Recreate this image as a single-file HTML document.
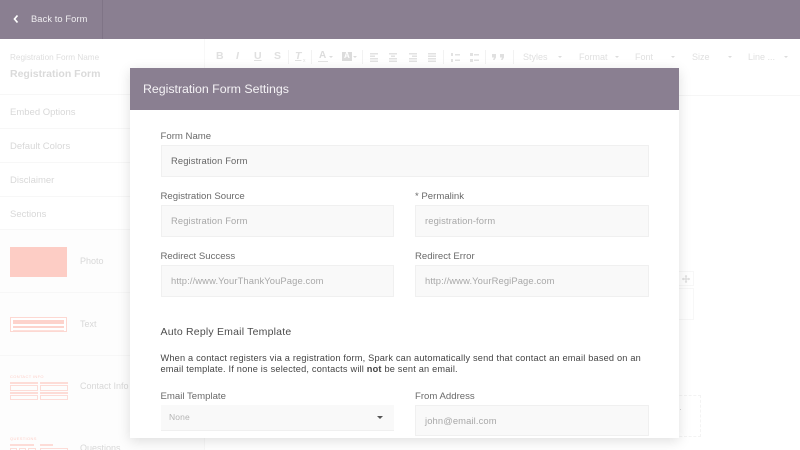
<!DOCTYPE html>
<html>
<head>
<meta charset="utf-8">
<style>
html,body{margin:0;padding:0;width:800px;height:450px;overflow:hidden;background:#fff;font-family:"Liberation Sans",sans-serif}
.a{position:absolute;white-space:nowrap}
#bg{position:absolute;left:0;top:0;width:800px;height:450px;overflow:hidden}
.side{color:#d8d8d8;font-size:10px}
.ln{position:absolute;left:0;width:205px;height:1px;background:#f7f7f7}
.tb{color:#e0e0e0;font-size:9px}
.arr{position:absolute;width:0;height:0;border-left:2px solid transparent;border-right:2px solid transparent;border-top:2px solid #dcdcdc;top:56px}
.sep{position:absolute;top:50px;width:1px;height:14px;background:#f2f2f2}
.tbg{font-weight:bold;font-size:10.5px;line-height:12px;color:#e0e0e0;position:absolute;top:50px}
#modal{position:absolute;left:130px;top:68px;width:549px;height:370px;background:#fff;box-shadow:0 3px 12px rgba(0,0,0,.13);overflow:hidden}
#mh{position:absolute;left:0;top:0;width:549px;height:42px;background:#8a7f91;color:#f4f2f5;font-size:12.4px;line-height:42px;padding-left:13px;box-sizing:border-box;letter-spacing:-.03px}
.lb{position:absolute;font-size:9.6px;color:#6a6a6a;white-space:nowrap}
.f{position:absolute;background:#f9f9f9;border:1px solid #f0f0f0;box-sizing:border-box;height:32px;font-size:9.4px;line-height:30px;padding-left:9px;color:#a8a8a8;white-space:nowrap;letter-spacing:.12px}
</style>
</head>
<body>
<div id="bg">
  <div class="a" style="left:0;top:0;width:800px;height:39px;background:#8a7f91"></div>
  <div class="a" style="left:102px;top:0;width:1px;height:39px;background:#7f7486"></div>
  <svg class="a" style="left:12px;top:14px" width="8" height="10" viewBox="0 0 8 10"><path d="M5.500 1.500L2.500 5l3 3.500" fill="none" stroke="#fff" stroke-width="1.700"/></svg>
  <div class="a" style="left:31px;top:13px;font-size:9.300px;line-height:12px;color:#efedf0;letter-spacing:.1px">Back to Form</div>

  <div class="a" style="left:204px;top:39px;width:1px;height:411px;background:#f8f8f8"></div>
  <div class="a" style="left:205px;top:95px;width:595px;height:1px;background:#f6f6f6"></div>
  <div class="a side" style="left:10px;top:53px;font-size:8.200px;line-height:10px;color:#dedede">Registration Form Name</div>
  <div class="a side" style="left:10px;top:68px;font-size:10.500px;line-height:13px;font-weight:bold;color:#dadada">Registration Form</div>
  <div class="ln" style="top:94px"></div>
  <div class="a side" style="left:10px;top:107px;line-height:12px;font-size:9.500px">Embed Options</div>
  <div class="ln" style="top:128px"></div>
  <div class="a side" style="left:10px;top:141px;line-height:12px;font-size:9.500px">Default Colors</div>
  <div class="ln" style="top:162px"></div>
  <div class="a side" style="left:10px;top:175px;line-height:12px;font-size:9.500px">Disclaimer</div>
  <div class="ln" style="top:196px"></div>
  <div class="a side" style="left:10px;top:209px;line-height:12px;font-size:9.500px">Sections</div>
  <div class="a" style="left:0;top:230px;width:204px;height:220px;background:#fdfdfd"></div>
  <div class="ln" style="top:229px"></div>
  <div class="a" style="left:10px;top:247px;width:57px;height:30px;background:#fdcdc5"></div>
  <div class="a side" style="left:80px;top:255px;line-height:12px;font-size:9px">Photo</div>
  <div class="ln" style="top:292px"></div>
  <div class="a" style="left:10px;top:317px;width:57px;height:15px;border:1px solid #fdd8d2;box-sizing:border-box;background:#fff"></div>
  <div class="a" style="left:13px;top:320px;width:51px;height:4px;background:#fdd3cc"></div>
  <div class="a" style="left:13px;top:326px;width:51px;height:2px;background:#fdd3cc"></div>
  <div class="a" style="left:13px;top:329.500px;width:51px;height:1px;background:#fde0db"></div>
  <div class="a side" style="left:80px;top:318px;line-height:12px;font-size:9px">Text</div>
  <div class="ln" style="top:355px"></div>
  <div class="a" style="left:10px;top:374px;font-size:4px;line-height:6px;color:#fdd0c9;letter-spacing:.35px">CONTACT INFO</div>
  <svg class="a" style="left:10px;top:382px" width="58" height="18"><g fill="none" stroke="#fddcd7"><rect x=".5" y="3.500" width="27" height="5"/><rect x="30.500" y="3.500" width="27" height="5"/><rect x=".5" y="13.500" width="27" height="4"/><rect x="30.500" y="13.500" width="27" height="4"/></g><g fill="#fddcd7"><rect y="0" width="28" height="2"/><rect x="30" y="0" width="28" height="2"/><rect y="10" width="28" height="2"/><rect x="30" y="10" width="28" height="2"/></g></svg>
  <div class="a side" style="left:80px;top:380px;line-height:12px;font-size:9px">Contact Info</div>
  <div class="a" style="left:10px;top:436px;font-size:4px;line-height:6px;color:#fdd0c9;letter-spacing:.35px">QUESTIONS</div>
  <svg class="a" style="left:10px;top:444px" width="58" height="6"><g fill="none" stroke="#fddcd7"><rect x=".5" y="4.500" width="6" height="5"/><rect x="9.500" y="4.500" width="6" height="5"/><rect x="18.500" y="4.500" width="7" height="5"/><rect x="30.500" y="4.500" width="27" height="5"/></g><rect width="24" height="2" fill="#fddcd7"/><rect x="30" width="13" height="2" fill="#fddcd7"/></svg>
  <div class="a side" style="left:80px;top:442px;line-height:12px;font-size:9px">Questions</div>

  <div class="tbg" style="left:216px">B</div>
  <div class="tbg" style="left:236px;font-style:italic">I</div>
  <div class="tbg" style="left:254px;text-decoration:underline">U</div>
  <div class="tbg" style="left:274px">S</div>
  <div class="sep" style="left:288px"></div>
  <div class="tbg" style="left:295px;font-style:italic;text-decoration:underline">T</div>
  <div class="a" style="left:303px;top:58px;font-size:5px;line-height:6px;color:#e0e0e0">x</div>
  <div class="sep" style="left:311px"></div>
  <div class="a" style="left:319px;top:50px;font-size:10px;line-height:12px;font-weight:bold;color:#dcdcdc">A</div>
  <div class="a" style="left:318px;top:61px;width:10px;height:1px;background:#e4e4e4"></div>
  <div class="arr" style="left:329px"></div>
  <div class="a" style="left:342px;top:52px;width:10px;height:9px;background:#dcdcdc"></div>
  <div class="a" style="left:344px;top:51px;font-size:8px;line-height:10px;font-weight:bold;color:#fff">A</div>
  <div class="arr" style="left:353px"></div>
  <div class="sep" style="left:362px"></div>
  <svg class="a" style="left:370px;top:53px" width="67" height="9"><g fill="#e2e2e2"><path d="M0 0h8v1.500H0zM0 2.500h5V4H0zM0 5h8v1.500H0zM0 7.500h8V9H0z"/><path d="M19 0h8v1.500h-8zM21 2.500h4V4h-4zM19 5h8v1.500h-8zM19 7.500h8V9h-8z"/><path d="M39 0h8v1.500h-8zM42 2.500h5V4h-5zM39 5h8v1.500h-8zM39 7.500h8V9h-8z"/><path d="M58 0h8v1.500h-8zM58 2.500h8V4h-8zM58 5h8v1.500h-8zM58 7.500h8V9h-8z"/></g></svg>
  <div class="sep" style="left:443px"></div>
  <svg class="a" style="left:451px;top:53px" width="28" height="9"><g fill="#e2e2e2"><path d="M0 0h2v3H0zM0 6h2v3H0zM4 1h5v1.500H4zM4 6.500h5V8H4z"/><path d="M19 0h3v3h-3zM19 6h3v3h-3zM23 1h5v1.500h-5zM23 6.500h5V8h-5z"/></g></svg>
  <div class="sep" style="left:485px"></div>
  <svg class="a" style="left:492px;top:54px" width="14" height="7"><path d="M0 0h4v3.500L2.500 6H1l1-2.500H0zM8 0h4v3.500L10.500 6H9l1-2.500H8z" fill="#e0e0e0"/></svg>
  <div class="sep" style="left:513px"></div>
  <div class="a tb" style="left:523px;top:51px;line-height:12px">Styles</div><div class="arr" style="left:558px"></div>
  <div class="a tb" style="left:579px;top:51px;line-height:12px">Format</div><div class="arr" style="left:615px"></div>
  <div class="a tb" style="left:635px;top:51px;line-height:12px">Font</div><div class="arr" style="left:671px"></div>
  <div class="a tb" style="left:692px;top:51px;line-height:12px">Size</div><div class="arr" style="left:728px"></div>
  <div class="a tb" style="left:748px;top:51px;line-height:12px">Line ...</div><div class="arr" style="left:784px"></div>

  <div class="a" style="left:670px;top:271px;width:24px;height:15px;border:1px solid #f7f7f7;box-sizing:border-box"></div>
  <div class="a" style="left:670px;top:288px;width:24px;height:32px;border:1px solid #f7f7f7;box-sizing:border-box"></div>
  <svg class="a" style="left:682px;top:275px" width="8" height="8" viewBox="0 0 9 9"><path d="M4.500 0v9M0 4.500h9" stroke="#dedede" stroke-width="1.300"/><path d="M4.500 0L3 2h3zM4.500 9L3 7h3zM0 4.500L2 3v3zM9 4.500L7 3v3z" fill="#dedede"/></svg>
  <div class="a" style="left:670px;top:395px;width:31px;height:42px;border:1px dashed #f3f3f3;box-sizing:border-box"></div>
  <div class="a" style="left:680px;top:409px;width:1px;height:1px;background:#d4d4d4"></div>
</div>

<div id="modal">
  <div id="mh">Registration Form Settings</div>
  <div class="lb" style="left:30.500px;top:63px">Form Name</div>
  <div class="f" style="left:31px;top:77px;width:488px;color:#666">Registration Form</div>
  <div class="lb" style="left:30.500px;top:123px">Registration Source</div>
  <div class="f" style="left:31px;top:137px;width:233px">Registration Form</div>
  <div class="lb" style="left:285px;top:123px">* Permalink</div>
  <div class="f" style="left:285px;top:137px;width:234px">registration-form</div>
  <div class="lb" style="left:30.500px;top:183px">Redirect Success</div>
  <div class="f" style="left:31px;top:197px;width:233px">http://www.YourThankYouPage.com</div>
  <div class="lb" style="left:285px;top:183px">Redirect Error</div>
  <div class="f" style="left:285px;top:197px;width:234px">http://www.YourRegiPage.com</div>
  <div class="a" style="left:30.500px;top:257px;font-size:10.500px;line-height:14px;color:#4d4d4d;letter-spacing:.2px">Auto Reply Email Template</div>
  <div class="a" style="left:30.500px;top:284.500px;font-size:9.200px;line-height:11.500px;color:#444;letter-spacing:.2px">When a contact registers via a registration form, Spark can automatically send that contact an email based on an<br>email template. If none is selected, contacts will <b>not</b> be sent an email.</div>
  <div class="lb" style="left:30.500px;top:323px">Email Template</div>
  <div class="f" style="left:31px;top:337px;width:233px;height:26px;line-height:24px;font-size:8.500px;padding-left:8px;background:#f9f9f9;border-width:0 0 1px 0;color:#b4b4b4">None</div>
  <div class="a" style="left:247px;top:347.500px;width:0;height:0;border-left:3.500px solid transparent;border-right:3.500px solid transparent;border-top:3.500px solid #555"></div>
  <div class="lb" style="left:285px;top:323px">From Address</div>
  <div class="f" style="left:285px;top:337px;width:234px;height:31px;line-height:29px">john@email.com</div>
</div>
</body>
</html>
